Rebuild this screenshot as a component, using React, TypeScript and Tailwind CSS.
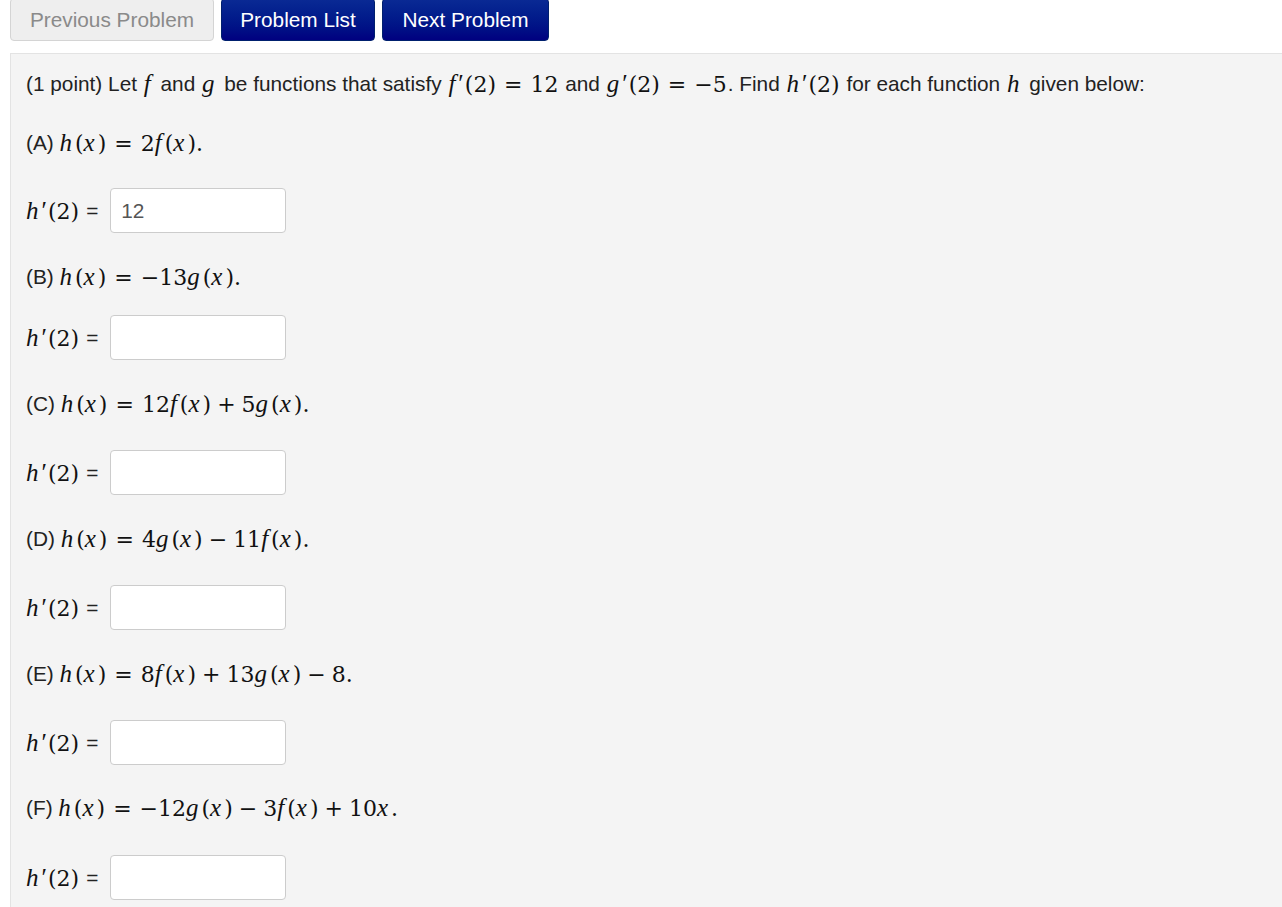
import React from "react";

const M = ({ children, className = "" }: { children: React.ReactNode; className?: string }) => (
  <span
    className={"text-[22px] whitespace-nowrap text-[#111111] " + className}
    style={{ fontFamily: '"DejaVu Serif", "Liberation Serif", serif' }}
  >
    {children}
  </span>
);
const I = ({ children }: { children: React.ReactNode }) => (
  <i className="text-[25px] mr-[3px]" style={{ fontFamily: '"Liberation Serif", "Times New Roman", serif' }}>
    {children}
  </i>
);
const Rel = ({ children }: { children: React.ReactNode }) => <span className="mx-[8px]">{children}</span>;
const Bin = ({ children }: { children: React.ReactNode }) => <span className="mx-[6px]">{children}</span>;
const Pr = () => (
  <span className="text-[25px] mr-[1px]" style={{ fontFamily: '"Liberation Serif", serif' }}>
    ′
  </span>
);

const HRow = ({ value }: { value?: string }) => (
  <div className="flex items-center h-[45px]">
    <M>
      <I>h</I>
      <Pr />
      (2)
    </M>
    <span className="ml-[7px] mr-[12px]">=</span>
    <div className="w-[176px] h-[45px] bg-white border border-[#cccccc] rounded-[4px] flex items-center px-[10px] text-[#555555]">
      {value}
    </div>
  </div>
);

const Label = ({ children, className = "" }: { children: React.ReactNode; className?: string }) => (
  <div className={"flex items-center h-[32px] " + className}>{children}</div>
);

export default function App() {
  const fx = (
    <>
      <I>f</I>(<I>x</I>)
    </>
  );
  const gx = (
    <>
      <I>g</I>(<I>x</I>)
    </>
  );
  const hx = (
    <>
      <I>h</I>(<I>x</I>)
    </>
  );
  const p2 = (
    <>
      <Pr />
      (2)
    </>
  );
  return (
    <div
      className="w-[1282px] h-[907px] overflow-hidden bg-white text-[20.8px] text-[#222222]"
      style={{ fontFamily: '"Liberation Sans", Arial, sans-serif' }}
    >
      <div className="flex gap-[7px] pl-[10px] -mt-[2px]">
        <div className="h-[43px] w-[204px] flex items-center justify-center rounded-[4px] bg-[#eeeeee] border border-[#d4d4d4] text-[#8a8a8a]">
          Previous Problem
        </div>
        <div className="h-[43px] w-[154px] flex items-center justify-center rounded-[4px] bg-gradient-to-b from-[#0a2a94] to-[#000080] border border-[#00206e] text-white">
          Problem List
        </div>
        <div className="h-[43px] w-[167px] flex items-center justify-center rounded-[4px] bg-gradient-to-b from-[#0a2a94] to-[#000080] border border-[#00206e] text-white">
          Next Problem
        </div>
      </div>
      <div className="mt-[12px] ml-[10px] bg-[#f4f4f4] border-t border-l border-[#e3e3e3] pl-[15px] pt-[14px] h-[900px]">
        <Label>
          <span>(1 point) Let&nbsp;</span>
          <M className="px-[1px]">
            <I>f</I>
          </M>
          <span>&nbsp;and&nbsp;</span>
          <M className="px-[1px]">
            <I>g</I>
          </M>
          <span>&nbsp;be functions that satisfy&nbsp;</span>
          <M className="px-[1px]">
            <I>f</I>
            {p2}
            <Rel>=</Rel>12
          </M>
          <span>&nbsp;and&nbsp;</span>
          <M className="px-[1px]">
            <I>g</I>
            {p2}
            <Rel>=</Rel>−5
          </M>
          <span>. Find&nbsp;</span>
          <M className="px-[1px]">
            <I>h</I>
            {p2}
          </M>
          <span>&nbsp;for each function&nbsp;</span>
          <M className="px-[1px]">
            <I>h</I>
          </M>
          <span>&nbsp;given below:</span>
        </Label>

        <Label className="mt-[27px]">
          <span>(A)&nbsp;</span>
          <M>
            {hx}
            <Rel>=</Rel>2{fx}.
          </M>
        </Label>
        <div className="mt-[29px]">
          <HRow value="12" />
        </div>

        <Label className="mt-[28px]">
          <span>(B)&nbsp;</span>
          <M>
            {hx}
            <Rel>=</Rel>−13{gx}.
          </M>
        </Label>
        <div className="mt-[22px]">
          <HRow />
        </div>

        <Label className="mt-[28px]">
          <span>(C)&nbsp;</span>
          <M>
            {hx}
            <Rel>=</Rel>12{fx}
            <Bin>+</Bin>5{gx}.
          </M>
        </Label>
        <div className="mt-[30px]">
          <HRow />
        </div>

        <Label className="mt-[28px]">
          <span>(D)&nbsp;</span>
          <M>
            {hx}
            <Rel>=</Rel>4{gx}
            <Bin>−</Bin>11{fx}.
          </M>
        </Label>
        <div className="mt-[30px]">
          <HRow />
        </div>

        <Label className="mt-[28px]">
          <span>(E)&nbsp;</span>
          <M>
            {hx}
            <Rel>=</Rel>8{fx}
            <Bin>+</Bin>13{gx}
            <Bin>−</Bin>8.
          </M>
        </Label>
        <div className="mt-[30px]">
          <HRow />
        </div>

        <Label className="mt-[27px]">
          <span>(F)&nbsp;</span>
          <M>
            {hx}
            <Rel>=</Rel>−12{gx}
            <Bin>−</Bin>3{fx}
            <Bin>+</Bin>10<I>x</I>.
          </M>
        </Label>
        <div className="mt-[31px]">
          <HRow />
        </div>
      </div>
    </div>
  );
}
